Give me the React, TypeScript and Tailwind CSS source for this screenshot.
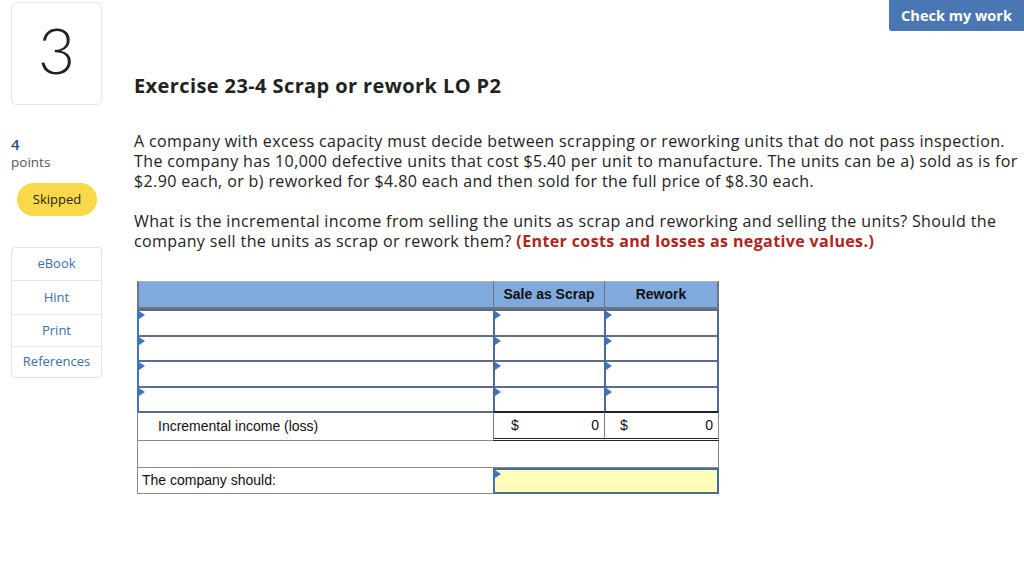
import React from "react";

const Marker = () => (
  <span className="absolute left-0 top-0 w-0 h-0 border-t-[4px] border-b-[4px] border-l-[6px] border-t-transparent border-b-transparent border-l-[#3f74c0]" />
);

function InputCell({ first = false }: { first?: boolean }) {
  return (
    <div className={`relative h-full bg-white border-t-2 border-[#5b6f8c] ${first ? "border-l-2 border-l-[#3f74c0]" : "border-l-2 border-l-[#4a6a9a]"}`}>
      <Marker />
    </div>
  );
}

export default function App() {
  const sans = { fontFamily: '"Open Sans", "Liberation Sans", sans-serif' };
  return (
    <div className="relative w-[1024px] h-[579px] bg-white text-[#222]" style={sans}>
      <button className="absolute right-0 top-0 w-[135px] h-[31px] bg-[#4a77b4] text-white font-bold text-[14.5px] rounded-bl-[3px]">
        Check my work
      </button>

      <div className="flex">
        {/* Left column */}
        <div className="ml-[11px] w-[91px] flex flex-col">
          <div className="mt-[2px] h-[103px] rounded-[5px] border border-[#e6e6e6] flex items-center justify-center">
            <span className="text-[64px] font-light leading-none text-[#222] -mt-[8px]" style={{ fontFamily: 'Lato, "Open Sans", sans-serif' }}>3</span>
          </div>
          <div className="mt-[31px] text-[15px] leading-[17px] font-semibold text-[#1f4f8f]">4</div>
          <div className="text-[13.5px] leading-[18px] text-[#555]">points</div>
          <div className="mt-[12px] ml-[6px] w-[80px] h-[33px] rounded-full bg-[#f9d84a] flex items-center justify-center text-[13px] text-[#222]">
            Skipped
          </div>
          <div className="mt-[31px] rounded-[4px] border border-[#e3e3e3] flex flex-col text-[13px] text-[#3d6cb0]">
            <div className="h-[33px] flex items-center justify-center border-b border-[#e6e6e6]">eBook</div>
            <div className="h-[34px] flex items-center justify-center border-b border-[#e6e6e6]">Hint</div>
            <div className="h-[32px] flex items-center justify-center border-b border-[#e6e6e6]">Print</div>
            <div className="h-[30px] flex items-center justify-center">References</div>
          </div>
        </div>

        {/* Main column */}
        <div className="ml-[32px] flex flex-col">
          <h1 className="mt-[74px] text-[20px] font-bold leading-[24px] tracking-[0.4px] text-[#222]">
            Exercise 23-4 Scrap or rework LO P2
          </h1>
          <div className="mt-[33px] text-[16px] leading-[20px] tracking-[0.38px] whitespace-nowrap">
            <p>
              A company with excess capacity must decide between scrapping or reworking units that do not pass inspection.
              <br />
              The company has 10,000 defective units that cost $5.40 per unit to manufacture. The units can be a) sold as is for
              <br />
              $2.90 each, or b) reworked for $4.80 each and then sold for the full price of $8.30 each.
            </p>
            <p className="mt-[20px]">
              What is the incremental income from selling the units as scrap and reworking and selling the units? Should the
              <br />
              company sell the units as scrap or rework them?{" "}
              <span className="font-bold text-[#b0241c]">(Enter costs and losses as negative values.)</span>
            </p>
          </div>

          {/* Table */}
          <div
            className="mt-[30px] ml-[3px] w-[582px] grid grid-cols-[356px_111px_115px] text-[14px] text-[#111]"
            style={{ fontFamily: '"Liberation Sans", Arial, sans-serif' }}
          >
            {/* header */}
            <div className="h-[28px] bg-[#80aadd] border-t border-t-[#b5b5b5] border-l-2 border-l-[#6d7482] border-b-2 border-b-[#6d7482]" />
            <div className="h-[28px] bg-[#80aadd] border-t border-t-[#b5b5b5] border-l border-l-[#6d7482] border-b-2 border-b-[#6d7482] flex items-center justify-center font-bold">
              Sale as Scrap
            </div>
            <div className="h-[28px] bg-[#80aadd] border-t border-t-[#b5b5b5] border-l border-l-[#6d7482] border-r-2 border-r-[#6d7482] border-b-2 border-b-[#6d7482] flex items-center justify-center font-bold">
              Rework
            </div>

            {[0, 1, 2, 3].map((i) => (
              <React.Fragment key={i}>
                <div className="h-[25.5px]"><InputCell first /></div>
                <div className="h-[25.5px]"><InputCell /></div>
                <div className="h-[25.5px] border-r-2 border-r-[#4a6a9a]"><InputCell /></div>
              </React.Fragment>
            ))}

            {/* incremental */}
            <div className="h-[30px] border-t-2 border-t-[#5b6f8c] border-l border-l-[#8a8a8a] border-b border-b-[#8a8a8a] flex items-center pl-[20px]">
              Incremental income (loss)
            </div>
            <div className="h-[30px] border-t-2 border-t-[#222] border-l border-l-[#7a7a7a] border-b-[3px] border-double border-b-[#222] flex items-center justify-between pl-[17px] pr-[5px]">
              <span>$</span>
              <span>0</span>
            </div>
            <div className="h-[30px] border-t-2 border-t-[#222] border-l border-l-[#7a7a7a] border-r border-r-[#8a8a8a] border-b-[3px] border-double border-b-[#222] flex items-center justify-between pl-[15px] pr-[5px]">
              <span>$</span>
              <span>0</span>
            </div>

            {/* empty row */}
            <div className="col-span-3 h-[27px] border-l border-l-[#8a8a8a] border-r border-r-[#8a8a8a] border-b border-b-[#8a8a8a]" />

            {/* company should */}
            <div className="h-[26px] border-l border-l-[#8a8a8a] border-b border-b-[#8a8a8a] flex items-center pl-[4px]">
              The company should:
            </div>
            <div className="col-span-2 h-[26px] relative bg-[#ffffbb] border-2 border-[#4a6a9a] border-l-[#3f74c0]">
              <Marker />
            </div>
          </div>
        </div>
      </div>
    </div>
  );
}
